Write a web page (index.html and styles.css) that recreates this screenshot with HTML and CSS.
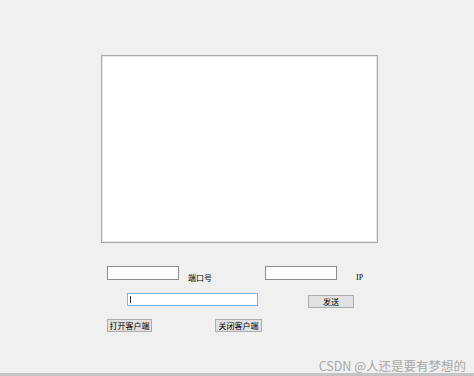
FILE: index.html
```html
<!DOCTYPE html>
<html lang="zh-CN">
<head>
    <meta charset="UTF-8">
    <title>客户端</title>
    <link rel="stylesheet" href="styles.css">
</head>
<body>
    <div class="window">
        <div class="log-box"></div>

        <div class="row row-addr">
            <input type="text" class="field field-port">
            <span class="label label-port">端口号</span>
            <input type="text" class="field field-ip">
            <span class="label label-ip">IP</span>
        </div>

        <div class="row row-send">
            <div class="field field-msg"><span class="caret"></span></div>
            <button class="btn btn-send">发送</button>
        </div>

        <div class="row row-actions">
            <button class="btn btn-open">打开客户端</button>
            <button class="btn btn-close">关闭客户端</button>
        </div>

        <div class="watermark">CSDN @人还是要有梦想的</div>
        <div class="bottom-bar"></div>
    </div>
</body>
</html>
```

FILE: styles.css
```css
* {
    margin: 0;
    padding: 0;
    box-sizing: border-box;
}

body {
    background-color: #f0f0f0;
    font-family: "Noto Sans CJK SC", "Microsoft YaHei", sans-serif;
    color: #000;
}

.window {
    position: relative;
    width: 474px;
    height: 376px;
    padding-top: 55px;
    overflow: hidden;
}

.log-box {
    margin-left: 101px;
    width: 277px;
    height: 188px;
    background-color: #fff;
    border: 1px solid #a9a9a9;
    box-shadow: inset 0 0 0 1px #e6e6e6;
}

.row {
    display: flex;
    align-items: flex-start;
}

.row-addr {
    margin-top: 23px;
    padding-left: 107px;
    height: 14px;
}

.field {
    display: block;
    height: 14px;
    background-color: #fff;
    border: 1px solid #8c8c8c;
    outline: none;
}

.field-port,
.field-ip {
    width: 72px;
}

.label {
    font-size: 8px;
    line-height: 8px;
    margin-top: 8px;
}

.label-port {
    margin-left: 9px;
    width: 24px;
}

.field-ip {
    margin-left: 53px;
}

.label-ip {
    margin-left: 19px;
    font-family: "Liberation Serif", serif;
    font-size: 8px;
}

.row-send {
    margin-top: 13px;
    padding-left: 127px;
}

.field-msg {
    width: 131px;
    height: 13px;
    border-color: #7eb4ea;
    position: relative;
}

.caret {
    position: absolute;
    left: 2px;
    top: 2px;
    width: 1px;
    height: 7px;
    background-color: #333;
}

.btn {
    height: 13px;
    font-family: inherit;
    font-size: 8px;
    line-height: 11px;
    background-color: #e1e1e1;
    border: 1px solid #adadad;
    color: #000;
}

.btn-send {
    margin-left: 50px;
    margin-top: 2px;
    width: 46px;
}

.row-actions {
    margin-top: 11px;
    padding-left: 107px;
}

.btn-open {
    width: 45px;
}

.btn-close {
    margin-left: 63px;
    width: 47px;
}

.watermark {
    position: absolute;
    right: 8px;
    bottom: 4px;
    font-family: "Noto Sans CJK SC", sans-serif;
    font-size: 12.5px;
    line-height: 12px;
    color: #a8a8a8;
}

.bottom-bar {
    position: absolute;
    left: 0;
    right: 0;
    bottom: 0;
    height: 3px;
    background-color: #c4c4c4;
}
```
